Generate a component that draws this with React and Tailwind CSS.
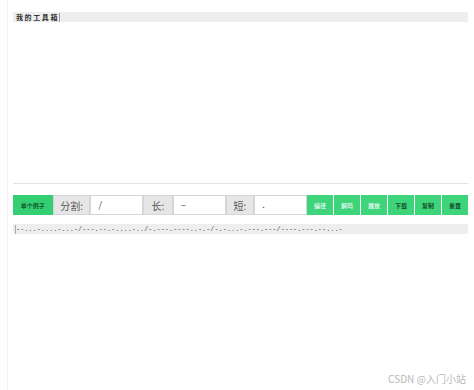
import React from 'react';

const morse = '--...-....-...-/---.--.-....-../-.---.----..-.-/-.-...-.---.---/----.---.--...-';

const Label = ({ children, w }) => (
  <div className={`${w} flex items-center justify-center bg-[#e6e6e6] border border-[#d6d6d6] text-[10px] text-[#555]`}>
    {children}
  </div>
);

const Field = ({ value, w }) => (
  <div className={`${w} flex items-center bg-white border border-[#d6d6d6] pl-[7px] text-[9px] text-[#444]`}>
    {value}
  </div>
);

const Btn = ({ children, light }) => (
  <div
    className={`w-[26px] flex items-center justify-center bg-[#3dd47a] text-[6px] font-bold ${
      light ? 'text-[#d9f7e4]' : 'text-[#14502b]'
    }`}
  >
    {children}
  </div>
);

const App = () => {
  return (
    <div
      className="relative w-[474px] h-[390px] bg-white pl-[7px] overflow-hidden"
      style={{ fontFamily: '"Noto Sans CJK SC", "Noto Sans", sans-serif' }}
    >
      <div className="h-full border-l border-[#f0f0f0] pl-[5px] pr-[6px] pt-[12px] flex flex-col">
        <div className="h-[10px] bg-[#eeeeee] flex items-center pl-[3px]">
          <span className="text-[7px] leading-none font-bold tracking-[1.6px] text-[#333]">我的工具箱</span>
          <span className="w-px h-[9px] bg-[#999]" />
        </div>

        <div className="mt-[161px] h-px bg-[#e2e2e2]" />

        <div className="mt-[11px] h-[20px] flex">
          <div className="w-[40px] flex items-center justify-center bg-[#34cf72] text-[6px] font-bold text-[#125a2c]">
            单个例子
          </div>
          <Label w="w-[38px]">分割:</Label>
          <Field w="w-[53px]" value="/" />
          <Label w="w-[30px]">长:</Label>
          <Field w="w-[53px]" value="–" />
          <Label w="w-[29px]">短:</Label>
          <Field w="w-[53px]" value="." />
          <div className="flex flex-1 gap-px">
            <Btn light>编译</Btn>
            <Btn light>解码</Btn>
            <Btn light>播放</Btn>
            <Btn>下载</Btn>
            <Btn>复制</Btn>
            <Btn>重置</Btn>
          </div>
        </div>

        <div className="mt-[9px] h-[10px] bg-[#eeeeee] flex items-center pl-[2px]">
          <span className="w-px h-[9px] bg-[#aaa]" />
          <span
            className="text-[6.9px] leading-none text-[#555]"
            style={{ fontFamily: '"Liberation Mono", monospace' }}
          >
            {morse}
          </span>
        </div>
      </div>

      <div className="absolute right-[8px] bottom-[4px] text-[10px] text-[#b8b8b8]">CSDN @入门小站</div>
    </div>
  );
};

export default App;
